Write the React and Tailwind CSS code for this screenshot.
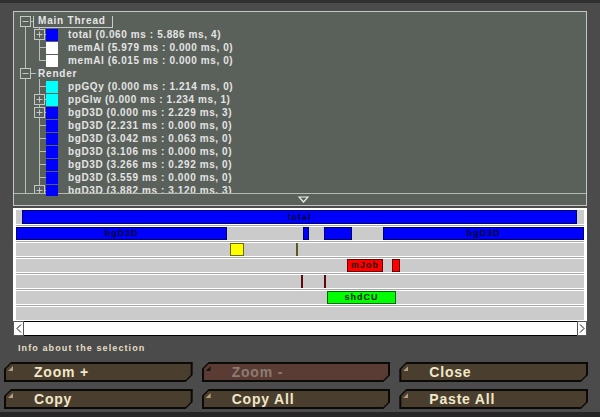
import React from 'react';

const treeRows = [
  { level: 0, label: 'Main Thread', frame: true },
  { level: 1, label: 'total (0.060 ms : 5.886 ms, 4)', color: '#0000ff', plus: true },
  { level: 1, label: 'memAl (5.979 ms : 0.000 ms, 0)', color: '#ffffff' },
  { level: 1, label: 'memAl (6.015 ms : 0.000 ms, 0)', color: '#ffffff' },
  { level: 0, label: 'Render' },
  { level: 1, label: 'ppGQy (0.000 ms : 1.214 ms, 0)', color: '#00ffff' },
  { level: 1, label: 'ppGlw (0.000 ms : 1.234 ms, 1)', color: '#00ffff', plus: true },
  { level: 1, label: 'bgD3D (0.000 ms : 2.229 ms, 3)', color: '#0000ff', plus: true },
  { level: 1, label: 'bgD3D (2.231 ms : 0.000 ms, 0)', color: '#0000ff' },
  { level: 1, label: 'bgD3D (3.042 ms : 0.063 ms, 0)', color: '#0000ff' },
  { level: 1, label: 'bgD3D (3.106 ms : 0.000 ms, 0)', color: '#0000ff' },
  { level: 1, label: 'bgD3D (3.266 ms : 0.292 ms, 0)', color: '#0000ff' },
  { level: 1, label: 'bgD3D (3.559 ms : 0.000 ms, 0)', color: '#0000ff' },
  { level: 1, label: 'bgD3D (3.882 ms : 3.120 ms, 3)', color: '#0000ff', plus: true },
];

// bars on the timeline, x in px from the row's left edge
const timeline = [
  [{ x: 6, w: 555, c: 'blue', t: 'total' }],
  [
    { x: 0, w: 211, c: 'blue', t: 'bgD3D' },
    { x: 287, w: 6, c: 'blue' },
    { x: 308, w: 28, c: 'blue' },
    { x: 367, w: 201, c: 'blue', t: 'bgD3D' },
  ],
  [
    { x: 214, w: 14, c: 'yellow' },
    { x: 280, w: 2, c: 'olive' },
  ],
  [
    { x: 331, w: 36, c: 'red', t: 'mJob' },
    { x: 376, w: 8, c: 'red' },
  ],
  [
    { x: 285, w: 2, c: 'dark' },
    { x: 308, w: 2, c: 'dark' },
  ],
  [{ x: 311, w: 69, c: 'green', t: 'shdCU' }],
  [],
];

const barColors = {
  blue: 'bg-[#0000ff] border-[#00006a] text-[#00002a]',
  yellow: 'bg-[#ffff00] border-[#6b6b00] text-black',
  olive: 'bg-[#8c8c3c] border-[#5a5a20] text-black',
  red: 'bg-[#ff0000] border-[#6a0000] text-[#1a0000]',
  dark: 'bg-[#8e1c1c] border-[#5a0a0a] text-black',
  green: 'bg-[#00ff00] border-[#006a00] text-[#001a00]',
};

function Toggle({ open }) {
  return (
    <div className="w-[11px] h-[11px] border border-[#c4c8c4] bg-[#5a615b] flex items-center justify-center shrink-0">
      <svg width="9" height="9" viewBox="0 0 9 9">
        <line x1="1.5" y1="4.5" x2="7.5" y2="4.5" stroke="#c4c8c4" strokeWidth="1" />
        {!open && <line x1="4.5" y1="1.5" x2="4.5" y2="7.5" stroke="#c4c8c4" strokeWidth="1" />}
      </svg>
    </div>
  );
}

function TreeLines() {
  const c = '#b9beb9';
  const center = (i) => 9.5 + 13 * i;
  const stubs = [2, 3, 5, 8, 9, 10, 11, 12];
  return (
    <svg className="absolute left-0 top-0" width="200" height="181">
      <line x1="11.5" y1="15" x2="11.5" y2="181" stroke={c} />
      <line x1="17" y1={center(0)} x2="19" y2={center(0)} stroke={c} />
      <line x1="17" y1={center(4)} x2="22" y2={center(4)} stroke={c} />
      <line x1="25.5" y1="15" x2="25.5" y2={center(3)} stroke={c} />
      <line x1="25.5" y1="67" x2="25.5" y2="181" stroke={c} />
      {stubs.map((i) => (
        <line key={i} x1="25.5" y1={center(i)} x2="32" y2={center(i)} stroke={c} />
      ))}
      {[1, 6, 7, 13].map((i) => (
        <line key={'b' + i} x1="31" y1={center(i)} x2="32" y2={center(i)} stroke={c} />
      ))}
    </svg>
  );
}

function GameButton({ label, disabled }) {
  return (
    <div className="h-[20px] bg-[#0c0a08] p-[2px] flex [clip-path:polygon(7px_0,100%_0,100%_calc(100%_-_7px),calc(100%_-_7px)_100%,0_100%,0_7px)]">
      <div
        className={`flex-1 flex items-center ${disabled ? 'bg-[#5a3c34]' : 'bg-[#4a3e2f]'} [clip-path:polygon(5px_0,100%_0,100%_calc(100%_-_5px),calc(100%_-_5px)_100%,0_100%,0_5px)]`}
      >
        <div
          className={`self-start mt-[2px] ml-[2px] w-[5px] h-[5px] ${disabled ? 'bg-[#1e1612]' : 'bg-[#b49c7e]'} [clip-path:polygon(100%_0,100%_100%,0_100%)]`}
        />
        <span
          className={`ml-[21px] text-[14px] leading-none font-bold tracking-[0.8px] ${disabled ? 'text-[#8c7c72]' : 'text-[#f1e8c8]'}`}
        >
          {label}
        </span>
      </div>
    </div>
  );
}

export default function App() {
  return (
    <div className="w-[600px] h-[417px] bg-[#4b4b4b] flex flex-col overflow-hidden font-['Liberation_Sans',Arial,sans-serif]">
      <div className="h-[3px] bg-[#303030] shrink-0" />

      {/* tree panel */}
      <div className="mt-[8px] mx-[13px] border border-[#c2c6c2] bg-[#5a615b] shrink-0">
        <div className="relative h-[181px] overflow-hidden">
          <TreeLines />
          <div className="relative pt-[3px]">
            {treeRows.map((r, i) =>
              r.level === 0 ? (
                <div key={i} className="h-[13px] flex items-center pl-[6px]">
                  <Toggle open />
                  <div
                    className={`ml-[2px] h-[12px] flex items-center pl-[4px] pr-[6px] ${r.frame ? 'border-l border-r border-b border-[#c8ccc8]' : 'border border-transparent'}`}
                  >
                    <span className="text-[10px] font-bold tracking-[0.8px] text-[#e6e6e6] leading-none">
                      {r.label}
                    </span>
                  </div>
                </div>
              ) : (
                <div key={i} className="h-[13px] flex items-center pl-[20px]">
                  {r.plus ? <Toggle /> : <div className="w-[11px] shrink-0" />}
                  <div className="ml-[1px] w-[12px] h-[12px] shrink-0" style={{ background: r.color }} />
                  <span className="ml-[10px] text-[10px] font-bold tracking-[0.6px] text-[#e4e4e4] leading-none whitespace-nowrap">
                    {r.label}
                  </span>
                </div>
              )
            )}
          </div>
        </div>
        <div className="relative h-[12px] border-t border-[#b4b9b4] flex justify-center items-center">
          <div className="absolute left-[32px] top-[-1px] w-[12px] h-[3px] bg-[#0000ff]" />
          <svg width="11" height="7" viewBox="0 0 11 7" className="ml-[6px]">
            <path d="M1 1 L10 1 L5.5 6 Z" fill="none" stroke="#eeeeee" strokeWidth="1.2" />
          </svg>
        </div>
      </div>

      {/* timeline */}
      <div className="mt-[2px] mx-[13px] bg-white shrink-0">
        <div className="pt-[2px] px-[3px] flex flex-col">
          {timeline.map((bars, i) => (
            <React.Fragment key={i}>
              {i > 0 && <div className="h-[3px] border-y border-white bg-[#a8a8a8]" />}
              <div className={`relative ${i === 0 ? 'h-[14px]' : 'h-[13px]'} bg-[#cbcbcb]`}>
                {bars.map((b, j) => (
                  <div
                    key={j}
                    className={`absolute top-0 bottom-0 border flex items-center justify-center ${barColors[b.c]}`}
                    style={{ left: b.x, width: b.w }}
                  >
                    {b.t && (
                      <span className="text-[9px] font-bold tracking-[1px] leading-none">{b.t}</span>
                    )}
                  </div>
                ))}
              </div>
            </React.Fragment>
          ))}
        </div>
        <div className="mt-[1px] h-[15px] flex">
          <div className="w-[11px] border border-[#555] bg-white flex items-center justify-center">
            <svg width="6" height="9" viewBox="0 0 6 9">
              <path d="M5 0.5 L1 4.5 L5 8.5" fill="none" stroke="#111" strokeWidth="1" />
            </svg>
          </div>
          <div className="flex-1 border-y border-black bg-white" />
          <div className="w-[10px] border border-[#555] bg-white flex items-center justify-center">
            <svg width="6" height="9" viewBox="0 0 6 9">
              <path d="M1 0.5 L5 4.5 L1 8.5" fill="none" stroke="#111" strokeWidth="1" />
            </svg>
          </div>
        </div>
      </div>

      <div className="mt-[7px] pl-[18px] h-[10px] flex items-center shrink-0">
        <span className="text-[9px] font-bold tracking-[1.1px] text-[#e6dfc6] leading-none">
          Info about the selection
        </span>
      </div>

      <div className="mt-[9px] pl-[4px] pr-[12px] grid grid-cols-3 gap-x-[9px] gap-y-[7px] shrink-0">
        <GameButton label="Zoom +" />
        <GameButton label="Zoom -" disabled />
        <GameButton label="Close" />
        <GameButton label="Copy" />
        <GameButton label="Copy All" />
        <GameButton label="Paste All" />
      </div>

      <div className="flex-1 mt-[3px] bg-[#262626]" />
    </div>
  );
}
